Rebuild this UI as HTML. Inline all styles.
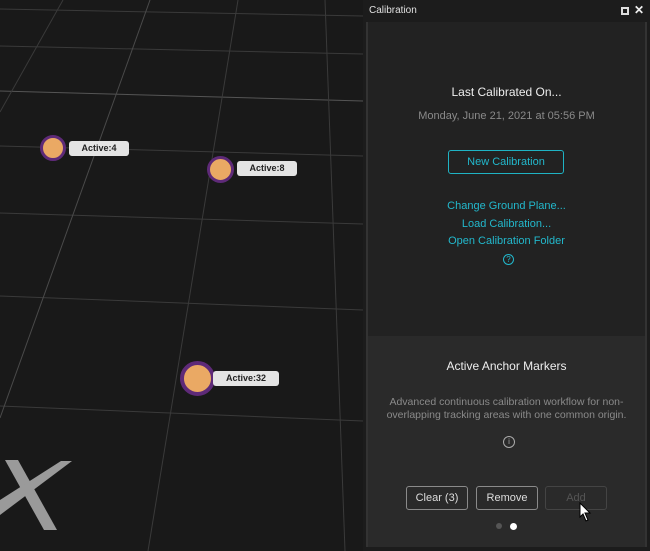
<!DOCTYPE html>
<html><head><style>
*{margin:0;padding:0;box-sizing:border-box}
body{width:650px;height:551px;background:#191919;overflow:hidden;position:relative;font-family:"Liberation Sans",sans-serif}
.lbl{position:absolute;height:15px;background:#e4e4e4;border-radius:3px;font:bold 9px "Liberation Sans",sans-serif;color:#222;text-align:center;line-height:15px}
.dot{position:absolute;border-radius:50%;background:#eaa964;border:3px solid #5e2a78}
#panel{position:absolute;left:363px;top:0;width:287px;height:551px;background:#1c1c1c}
.t{position:absolute;left:0;width:100%;text-align:center}
.btn{position:absolute;height:24px;border:1px solid #8a8a8a;border-radius:3px;color:#ddd;font-size:11px;text-align:center;line-height:22px}
.lnk{color:#22b8cc;font-size:11px}
</style></head><body>
<svg width="363" height="551" style="position:absolute;left:0;top:0">
<g stroke="#3a3a3a" stroke-width="1" fill="none">
<line x1="0" y1="9" x2="363" y2="16"/>
<line x1="0" y1="46" x2="363" y2="54"/>
<line x1="0" y1="91" x2="363" y2="101" stroke="#555"/>
<line x1="0" y1="146" x2="363" y2="156"/>
<line x1="0" y1="213" x2="363" y2="224"/>
<line x1="0" y1="296" x2="363" y2="310"/>
<line x1="0" y1="406" x2="363" y2="421"/>
<line x1="0" y1="112" x2="63" y2="0"/>
<line x1="150" y1="0" x2="0" y2="418" stroke="#4a4a4a"/>
<line x1="238" y1="0" x2="148" y2="551"/>
<line x1="325" y1="0" x2="345" y2="551"/>
</g>
<polygon points="5,460 18,460 57,530 44,530" fill="#9a9a9a"/>
<polygon points="61,461 72,461 0,515 0,500" fill="#9a9a9a"/>
</svg>
<div class="dot" style="left:40px;top:135px;width:26px;height:26px"></div>
<div class="lbl" style="left:69px;top:141px;width:60px">Active:4</div>
<div class="dot" style="left:207px;top:156px;width:27px;height:27px"></div>
<div class="lbl" style="left:237px;top:161px;width:60px">Active:8</div>
<div class="dot" style="left:180px;top:361px;width:35px;height:35px;border-width:4px"></div>
<div class="lbl" style="left:213px;top:371px;width:66px">Active:32</div>

<div id="panel">
<div style="position:absolute;left:6px;top:5px;color:#e0e0e0;font-size:10px">Calibration</div>
<div style="position:absolute;left:258px;top:7px;width:8px;height:8px;border:2px solid #ddd"></div>
<div style="position:absolute;left:271px;top:3px;color:#eee;font-size:12px;font-weight:bold">✕</div>
<div style="position:absolute;left:3px;top:22px;width:281px;height:525px;background:#222;border-left:2px solid #333;border-right:2px solid #333"></div>
<div style="position:absolute;left:5px;top:336px;width:277px;height:211px;background:#2a2a2a"></div>
<div class="t" style="top:85px;color:#eee;font-size:12px">Last Calibrated On...</div>
<div class="t" style="top:110px;color:#8a8a8a;font-size:11px">Monday, June 21, 2021 at 05:56 PM</div>
<div style="position:absolute;left:85px;top:150px;width:116px;height:24px;border:1px solid #1fb3c4;border-radius:3px;color:#22b8cc;font-size:11px;text-align:center;line-height:22px">New Calibration</div>
<div class="t lnk" style="top:200px">Change Ground Plane...</div>
<div class="t lnk" style="top:218px">Load Calibration...</div>
<div class="t lnk" style="top:235px">Open Calibration Folder</div>
<div style="position:absolute;left:140px;top:254px;width:11px;height:11px;border:1px solid #22b8cc;border-radius:50%;color:#22b8cc;font-size:8px;text-align:center;line-height:9px">?</div>
<div class="t" style="top:359px;color:#eee;font-size:12px">Active Anchor Markers</div>
<div class="t" style="top:396px;color:#8a8a8a;font-size:10.5px;line-height:13px">Advanced continuous calibration workflow for non-<br>overlapping tracking areas with one common origin.</div>
<div style="position:absolute;left:140px;top:436px;width:12px;height:12px;border:1px solid #aaa;border-radius:50%;color:#aaa;font-size:8px;text-align:center;line-height:10px">i</div>
<div class="btn" style="left:43px;top:486px;width:62px">Clear (3)</div>
<div class="btn" style="left:113px;top:486px;width:62px">Remove</div>
<div class="btn" style="left:182px;top:486px;width:62px;border-color:#444;color:#555">Add</div>
<div style="position:absolute;left:133px;top:523px;width:6px;height:6px;border-radius:50%;background:#555"></div>
<div style="position:absolute;left:147px;top:523px;width:7px;height:7px;border-radius:50%;background:#fff"></div>
<svg style="position:absolute;left:216px;top:502px" width="14" height="20"><path d="M1,1 L1,15 L4,12 L7,19 L9,18 L6,11 L11,11 Z" fill="#fff" stroke="#000" stroke-width="1"/></svg>
</div>
</body></html>
